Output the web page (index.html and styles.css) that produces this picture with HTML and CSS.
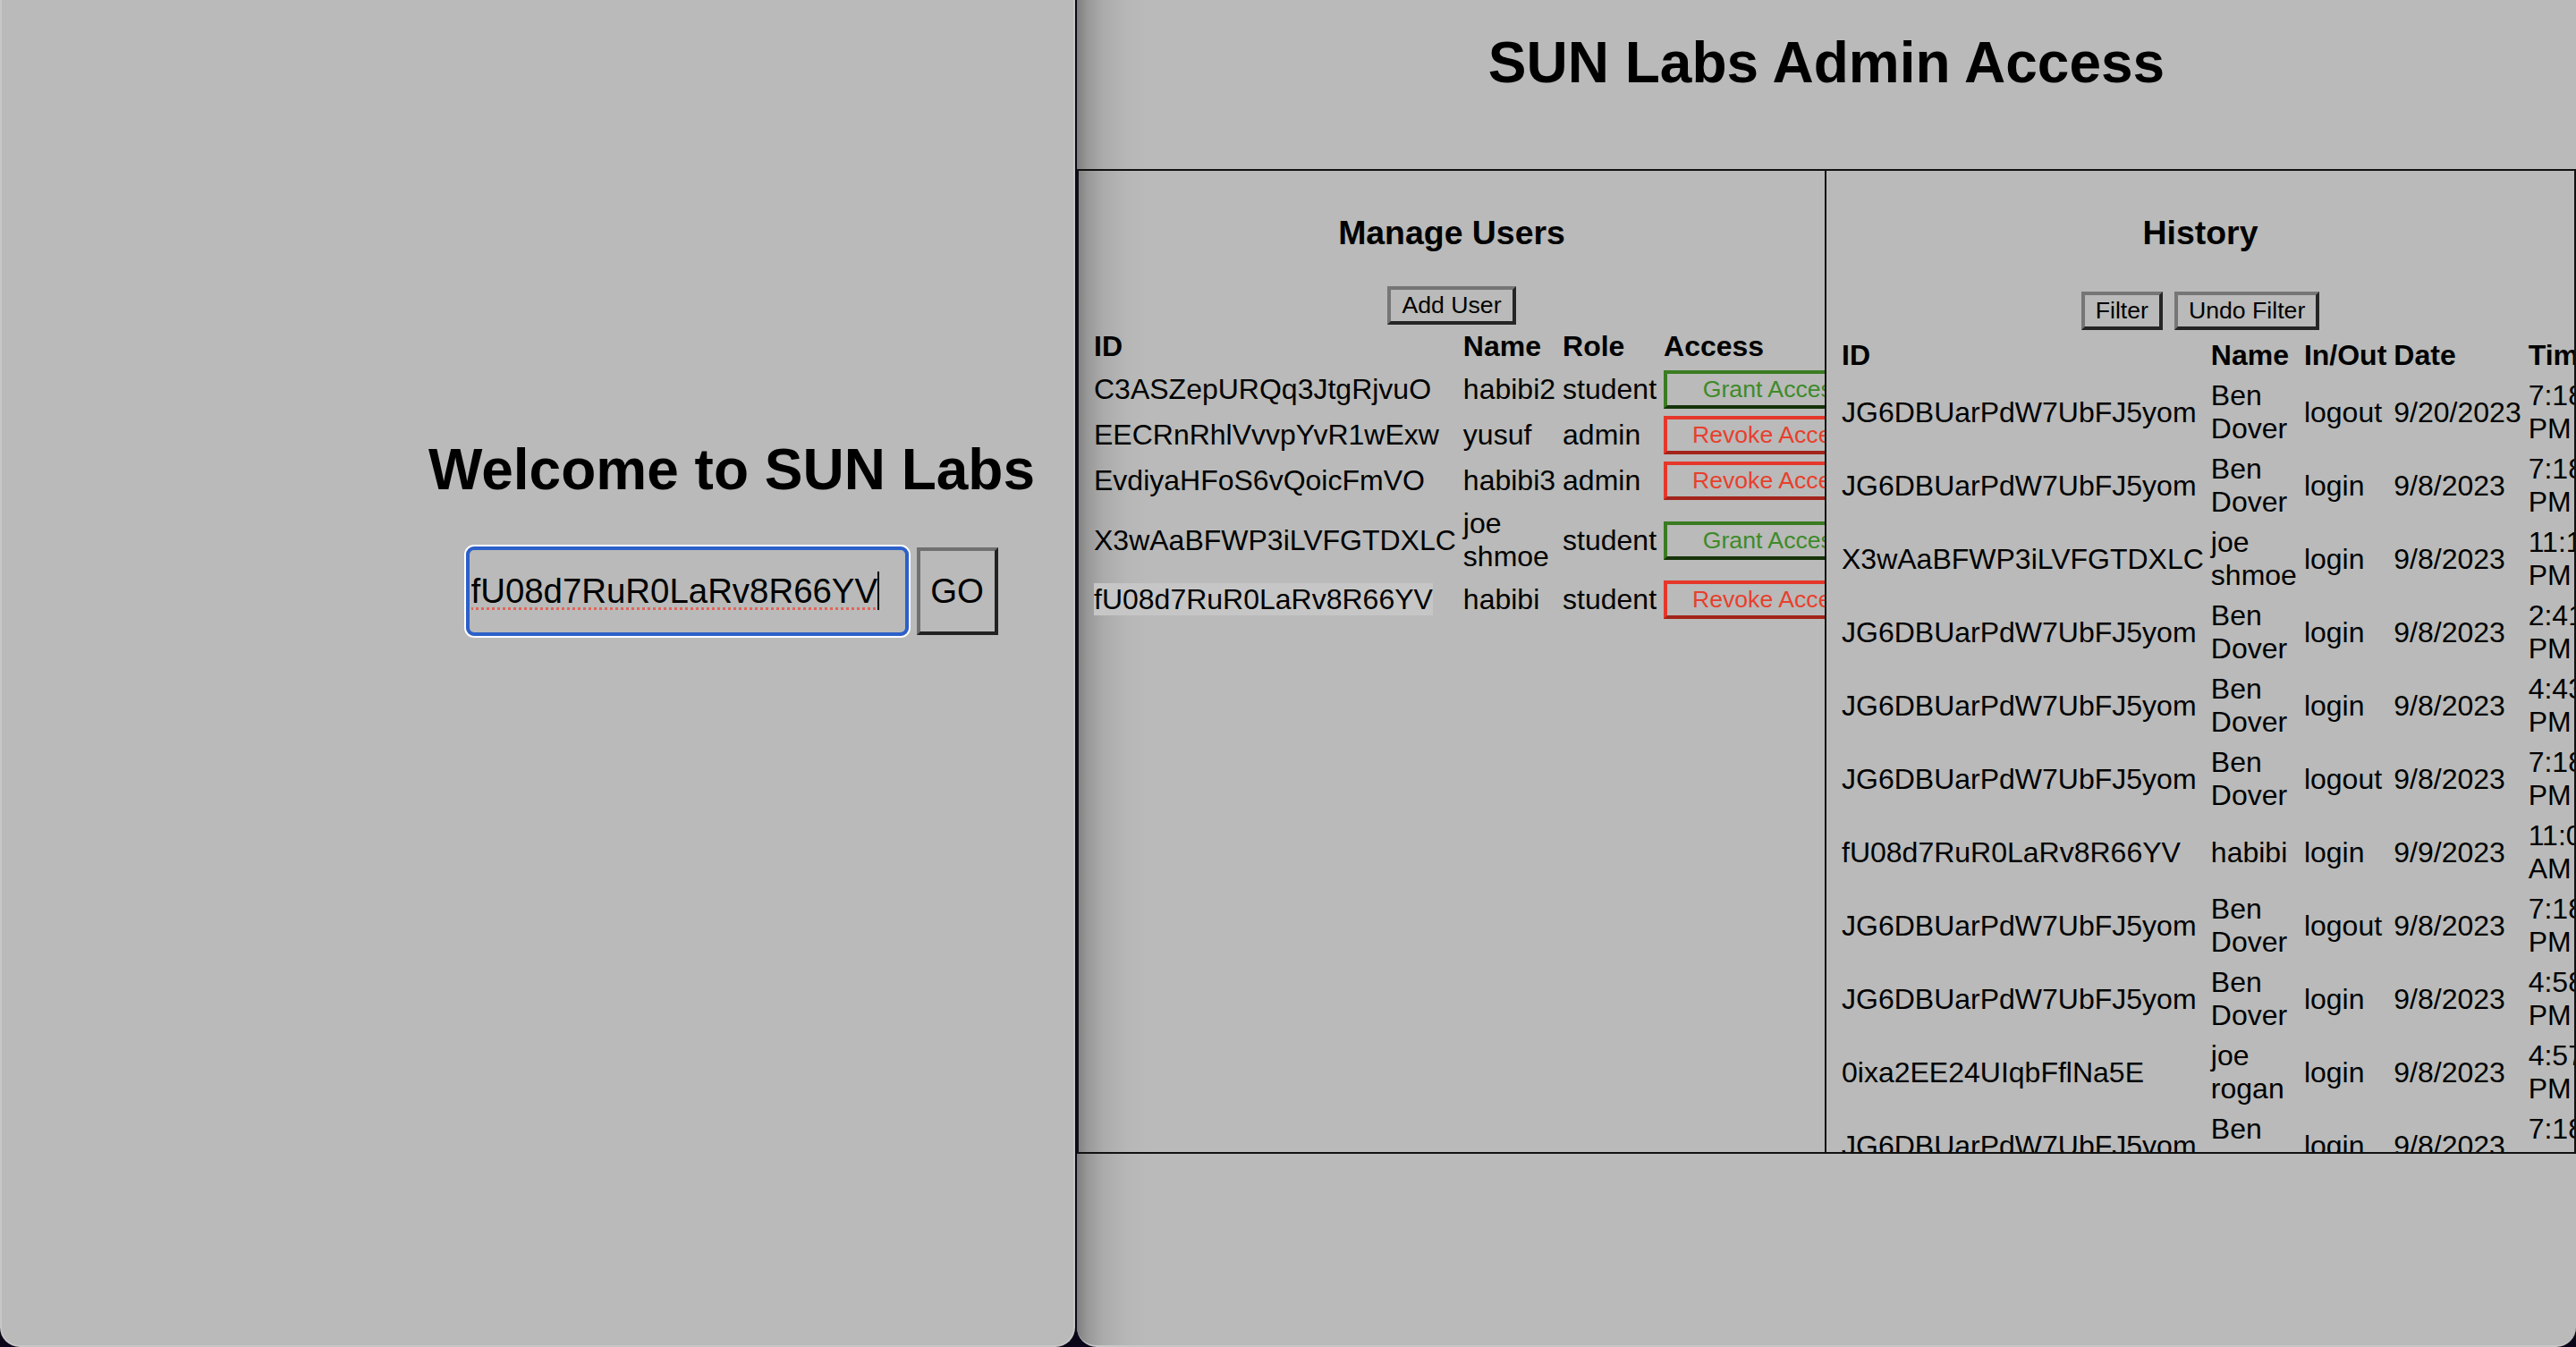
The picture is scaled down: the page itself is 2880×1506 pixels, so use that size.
FILE: index.html
```html
<!DOCTYPE html>
<html lang="en">
<head>
<meta charset="utf-8">
<title>SUN Labs</title>
<link rel="stylesheet" href="styles.css">
</head>
<body>
  <section class="login-pane">
    <h1 class="login-title">Welcome to SUN Labs</h1>
    <form class="login-form">
      <span class="field"><input class="id-input" type="text" value="fU08d7RuR0LaRv8R66YV" spellcheck="false"></span>
      <button class="btn go-btn" type="button">GO</button>
    </form>
  </section>

  <section class="admin-pane">
    <header class="admin-head">
      <h1 class="admin-title">SUN Labs Admin Access</h1>
    </header>
    <div class="panels">
      <div class="panel manage">
        <h3 class="panel-title">Manage Users</h3>
        <div class="actions">
          <button class="btn" type="button">Add User</button>
        </div>
        <table class="data">
          <thead>
            <tr><th>ID</th><th>Name</th><th>Role</th><th>Access</th></tr>
          </thead>
          <tbody>
            <tr><td>C3ASZepURQq3JtgRjvuO</td><td>habibi2</td><td>student</td><td><button class="btn access grant" type="button">Grant Access</button></td></tr>
            <tr><td>EECRnRhlVvvpYvR1wExw</td><td>yusuf</td><td>admin</td><td><button class="btn access revoke" type="button">Revoke Access</button></td></tr>
            <tr><td>EvdiyaHFoS6vQoicFmVO</td><td>habibi3</td><td>admin</td><td><button class="btn access revoke" type="button">Revoke Access</button></td></tr>
            <tr><td>X3wAaBFWP3iLVFGTDXLC</td><td>joe shmoe</td><td>student</td><td><button class="btn access grant" type="button">Grant Access</button></td></tr>
            <tr><td><span class="match">fU08d7RuR0LaRv8R66YV</span></td><td>habibi</td><td>student</td><td><button class="btn access revoke" type="button">Revoke Access</button></td></tr>
          </tbody>
        </table>
      </div>
      <div class="panel history">
        <h3 class="panel-title">History</h3>
        <div class="actions">
          <button class="btn" type="button">Filter</button>
          <button class="btn" type="button">Undo Filter</button>
        </div>
        <table class="data">
          <thead>
            <tr><th>ID</th><th>Name</th><th>In/Out</th><th>Date</th><th>Time</th></tr>
          </thead>
          <tbody>
            <tr><td>JG6DBUarPdW7UbFJ5yom</td><td>Ben Dover</td><td>logout</td><td>9/20/2023</td><td>7:18 PM</td></tr>
            <tr><td>JG6DBUarPdW7UbFJ5yom</td><td>Ben Dover</td><td>login</td><td>9/8/2023</td><td>7:18 PM</td></tr>
            <tr><td>X3wAaBFWP3iLVFGTDXLC</td><td>joe shmoe</td><td>login</td><td>9/8/2023</td><td>11:12 PM</td></tr>
            <tr><td>JG6DBUarPdW7UbFJ5yom</td><td>Ben Dover</td><td>login</td><td>9/8/2023</td><td>2:41 PM</td></tr>
            <tr><td>JG6DBUarPdW7UbFJ5yom</td><td>Ben Dover</td><td>login</td><td>9/8/2023</td><td>4:43 PM</td></tr>
            <tr><td>JG6DBUarPdW7UbFJ5yom</td><td>Ben Dover</td><td>logout</td><td>9/8/2023</td><td>7:18 PM</td></tr>
            <tr><td>fU08d7RuR0LaRv8R66YV</td><td>habibi</td><td>login</td><td>9/9/2023</td><td>11:04 AM</td></tr>
            <tr><td>JG6DBUarPdW7UbFJ5yom</td><td>Ben Dover</td><td>logout</td><td>9/8/2023</td><td>7:18 PM</td></tr>
            <tr><td>JG6DBUarPdW7UbFJ5yom</td><td>Ben Dover</td><td>login</td><td>9/8/2023</td><td>4:58 PM</td></tr>
            <tr><td>0ixa2EE24UIqbFflNa5E</td><td>joe rogan</td><td>login</td><td>9/8/2023</td><td>4:57 PM</td></tr>
            <tr><td>JG6DBUarPdW7UbFJ5yom</td><td>Ben Dover</td><td>login</td><td>9/8/2023</td><td>7:18 PM</td></tr>
            <tr><td>JG6DBUarPdW7UbFJ5yom</td><td>Ben Dover</td><td>logout</td><td>9/8/2023</td><td>7:18 PM</td></tr>
          </tbody>
        </table>
      </div>
    </div>
  </section>
</body>
</html>
```
FILE: styles.css
```css
html, body {
  margin: 0;
  padding: 0;
}

body {
  height: 100vh;
  display: flex;
  gap: 2px;
  overflow: hidden;
  background: #0c0718;
  color: #000;
  font-family: "Liberation Sans", Arial, sans-serif;
  font-size: 32px;
}

/* ---------- left pane ---------- */
.login-pane {
  box-sizing: border-box;
  width: 1202px;
  flex: none;
  height: 100%;
  padding: 488px 0 0 434px;
  background: #b9bab9;
  border: 2px solid #c6c7c6;
  border-top: 0;
  border-radius: 0 0 22px 22px;
}

.login-title {
  margin: 0;
  font-size: 64px;
  font-weight: bold;
  line-height: normal;
  text-align: center;
}

.login-form {
  margin: 49px 0 0;
  display: flex;
  justify-content: center;
  align-items: center;
  gap: 9px;
}

.field {
  position: relative;
  display: block;
}

.field::after {
  content: "";
  position: absolute;
  left: 460px;
  top: 28px;
  width: 2px;
  height: 43px;
  background: #000;
}

.id-input {
  box-sizing: border-box;
  display: block;
  width: 495px;
  height: 100px;
  margin: 0;
  padding: 0 2px;
  border: 4px solid #2c60c9;
  border-radius: 9px;
  box-shadow: 0 0 0 2px #fff;
  outline: none;
  background: transparent;
  color: #000;
  font-family: "Liberation Sans", Arial, sans-serif;
  font-size: 38.4px;
  text-decoration: underline dotted #e2655c;
  text-decoration-thickness: 3px;
  text-underline-offset: 5px;
}

.btn {
  box-sizing: border-box;
  margin: 0;
  padding: 2px 12px;
  height: 43px;
  border: 4px solid;
  border-color: #767676 #252525 #252525 #767676;
  background: transparent;
  color: #000;
  font-family: "Liberation Sans", Arial, sans-serif;
  font-size: 26.67px;
  line-height: normal;
  white-space: nowrap;
}

.go-btn {
  width: 91px;
  height: 98px;
  padding: 0;
  font-size: 38.4px;
  border-color: #707070 #222 #222 #707070;
}

/* ---------- right pane ---------- */
.admin-pane {
  box-sizing: border-box;
  flex: 1;
  min-width: 0;
  height: 100%;
  display: flex;
  flex-direction: column;
  background:
    linear-gradient(to right,
      rgba(0, 0, 0, 0.32) 0,
      rgba(0, 0, 0, 0.18) 12px,
      rgba(0, 0, 0, 0.08) 30px,
      rgba(0, 0, 0, 0.02) 55px,
      rgba(0, 0, 0, 0) 80px),
    #b9bab9;
  border-bottom: 2px solid #c6c7c6;
  border-radius: 0 0 22px 22px;
  overflow: hidden;
}

.admin-head {
  height: 189px;
  flex: none;
}

.admin-title {
  margin: 0;
  padding-top: 33px;
  font-size: 64px;
  font-weight: bold;
  line-height: normal;
  text-align: center;
}

.panels {
  box-sizing: border-box;
  height: 1101px;
  flex: none;
  display: grid;
  grid-template-columns: 1fr 1fr;
  border: 2px solid #111;
}

.panel {
  min-width: 0;
  overflow: hidden;
}

.manage {
  border-right: 2px solid #111;
}

.panel-title {
  margin: 48px 0 38px;
  font-size: 37.44px;
  font-weight: bold;
  line-height: normal;
  text-align: center;
}

.actions {
  display: flex;
  justify-content: center;
  gap: 13px;
}

.history .actions {
  padding-top: 6px;
}

.data {
  margin-left: 11px;
  border-collapse: separate;
  border-spacing: 4px;
  font-size: 32px;
  line-height: normal;
}

.history .data {
  margin-top: 4px;
}

.data th,
.data td {
  padding: 2px;
  text-align: left;
  vertical-align: middle;
}

.data th {
  font-weight: bold;
}

.match {
  background: #c5c6c5;
}

.access {
  width: 246px;
  text-align: center;
}

.grant {
  color: #3e8a2a;
  border-color: #3a7c22 #163309 #163309 #3a7c22;
}

.revoke {
  color: #e83f2d;
  border-color: #e5372a #a3241a #a3241a #e5372a;
}
```
